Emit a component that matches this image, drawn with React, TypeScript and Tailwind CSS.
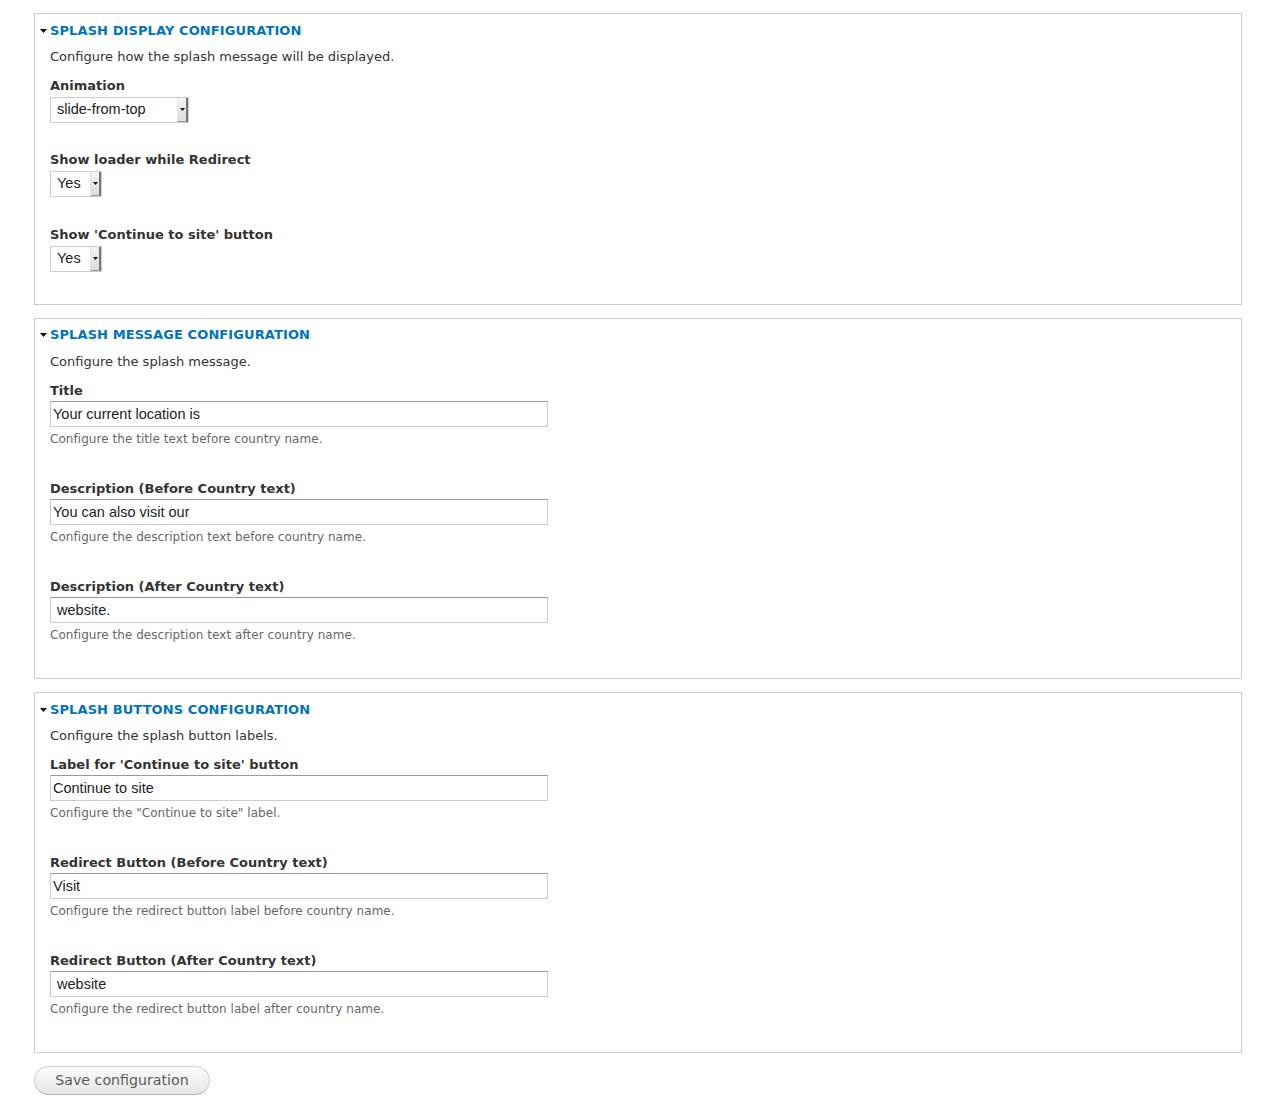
import React from "react";

const F = { fontFamily: '"DejaVu Sans", Verdana, sans-serif' };
const A = { fontFamily: '"Liberation Sans", Arial, sans-serif' };

function Legend({ children }: { children: React.ReactNode }) {
  return (
    <div className="flex items-center h-[18px] pl-[5px]">
      <svg width="8" height="5" viewBox="0 0 8 5" className="mr-[2px] mt-[1px]">
        <polygon points="0,0 7,0 3.5,4" fill="#111" />
      </svg>
      <span className="text-[13px] font-bold uppercase tracking-[0.1px] text-[#0074bd] leading-[18px]">{children}</span>
    </div>
  );
}

function Select({ value, width }: { value: string; width: string }) {
  return (
    <div className={`flex h-[26px] border border-[#ccc] bg-white ${width}`}>
      <div className="flex-1 pl-[6px] text-[14.5px] leading-[23px] text-[#222]" style={A}>{value}</div>
      <div className="w-[11px] h-full flex items-center justify-center bg-gradient-to-b from-[#f4f4f4] to-[#dcdcdc] border-l border-[#e4e4e4] border-r-2 border-r-[#777] border-b border-b-[#999]">
        <svg width="5" height="3" viewBox="0 0 5 3">
          <polygon points="0,0 5,0 2.5,3" fill="#111" />
        </svg>
      </div>
    </div>
  );
}

function TextField({ label, value, desc, first }: { label: string; value: string; desc: string; first?: boolean }) {
  return (
    <div className={first ? "mt-[11px]" : "mt-[33px]"}>
      <div className="text-[13px] font-bold text-[#333] leading-[18px] mb-[1px]">{label}</div>
      <input
        readOnly
        value={value}
        className="block w-[498px] h-[26px] border border-[#ccc] border-t-[#999] px-[2px] pb-[1px] text-[14.5px] text-[#222] outline-none bg-white"
        style={A}
      />
      <div className="mt-[4px] text-[12px] tracking-[0.05px] leading-[16px] text-[#666]">{desc}</div>
    </div>
  );
}

export default function App() {
  return (
    <div className="bg-white min-h-[1112px] pt-[13px] px-[34px] text-[#333]" style={F}>
      {/* Fieldset 1 */}
      <div className="border border-[#ccc] w-[1208px] pt-[8px] pb-[32px]">
        <Legend>Splash display configuration</Legend>
        <div className="pl-[15px]">
          <div className="mt-[8px] text-[13px] leading-[18px]">Configure how the splash message will be displayed.</div>
          <div className="mt-[11px]">
            <div className="text-[13px] font-bold leading-[18px] mb-[2px]">Animation</div>
            <Select value="slide-from-top" width="w-[139px]" />
          </div>
          <div className="mt-[28px]">
            <div className="text-[13px] font-bold leading-[18px] mb-[2px]">Show loader while Redirect</div>
            <Select value="Yes" width="w-[52px]" />
          </div>
          <div className="mt-[29px]">
            <div className="text-[13px] font-bold leading-[18px] mb-[2px]">Show 'Continue to site' button</div>
            <Select value="Yes" width="w-[52px]" />
          </div>
        </div>
      </div>

      {/* Fieldset 2 */}
      <div className="border border-[#ccc] w-[1208px] mt-[13px] pt-[7px] pb-[35px]">
        <Legend>Splash message configuration</Legend>
        <div className="pl-[15px]">
          <div className="mt-[9px] text-[13px] leading-[18px]">Configure the splash message.</div>
          <TextField first label="Title" value="Your current location is" desc="Configure the title text before country name." />
          <TextField label="Description (Before Country text)" value="You can also visit our" desc="Configure the description text before country name." />
          <TextField label="Description (After Country text)" value=" website." desc="Configure the description text after country name." />
        </div>
      </div>

      {/* Fieldset 3 */}
      <div className="border border-[#ccc] w-[1208px] mt-[13px] pt-[8px] pb-[35px]">
        <Legend>Splash buttons configuration</Legend>
        <div className="pl-[15px]">
          <div className="mt-[8px] text-[13px] leading-[18px]">Configure the splash button labels.</div>
          <TextField first label="Label for 'Continue to site' button" value="Continue to site" desc={'Configure the "Continue to site" label.'} />
          <TextField label="Redirect Button (Before Country text)" value="Visit" desc="Configure the redirect button label before country name." />
          <TextField label="Redirect Button (After Country text)" value=" website" desc="Configure the redirect button label after country name." />
        </div>
      </div>

      <button
        className="mt-[13px] h-[29px] w-[176px] rounded-full border border-[#d0d0d0] border-b-[#b4b4b4] bg-gradient-to-b from-[#fcfcfc] to-[#e6e6e6] text-[14.2px] text-[#5a5a5a]"
        style={F}
      >
        Save configuration
      </button>
    </div>
  );
}
